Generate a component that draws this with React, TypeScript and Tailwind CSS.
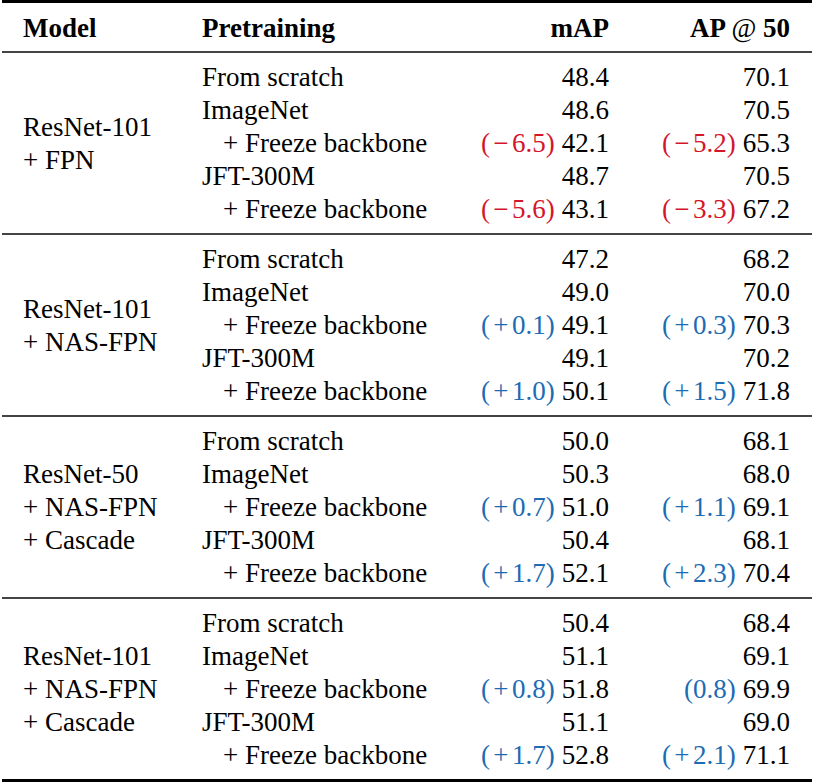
const GROUPS = [
  {
    model: ["ResNet-101", "+ FPN"],
    rows: [
      { name: "From scratch", map: "48.4", ap: "70.1" },
      { name: "ImageNet", map: "48.6", ap: "70.5" },
      { name: "+ Freeze backbone", sub: true, map: "42.1", ap: "65.3", dMap: ["−", "6.5"], dAp: ["−", "5.2"] },
      { name: "JFT-300M", map: "48.7", ap: "70.5" },
      { name: "+ Freeze backbone", sub: true, map: "43.1", ap: "67.2", dMap: ["−", "5.6"], dAp: ["−", "3.3"] },
    ],
  },
  {
    model: ["ResNet-101", "+ NAS-FPN"],
    rows: [
      { name: "From scratch", map: "47.2", ap: "68.2" },
      { name: "ImageNet", map: "49.0", ap: "70.0" },
      { name: "+ Freeze backbone", sub: true, map: "49.1", ap: "70.3", dMap: ["+", "0.1"], dAp: ["+", "0.3"] },
      { name: "JFT-300M", map: "49.1", ap: "70.2" },
      { name: "+ Freeze backbone", sub: true, map: "50.1", ap: "71.8", dMap: ["+", "1.0"], dAp: ["+", "1.5"] },
    ],
  },
  {
    model: ["ResNet-50", "+ NAS-FPN", "+ Cascade"],
    rows: [
      { name: "From scratch", map: "50.0", ap: "68.1" },
      { name: "ImageNet", map: "50.3", ap: "68.0" },
      { name: "+ Freeze backbone", sub: true, map: "51.0", ap: "69.1", dMap: ["+", "0.7"], dAp: ["+", "1.1"] },
      { name: "JFT-300M", map: "50.4", ap: "68.1" },
      { name: "+ Freeze backbone", sub: true, map: "52.1", ap: "70.4", dMap: ["+", "1.7"], dAp: ["+", "2.3"] },
    ],
  },
  {
    model: ["ResNet-101", "+ NAS-FPN", "+ Cascade"],
    rows: [
      { name: "From scratch", map: "50.4", ap: "68.4" },
      { name: "ImageNet", map: "51.1", ap: "69.1" },
      { name: "+ Freeze backbone", sub: true, map: "51.8", ap: "69.9", dMap: ["+", "0.8"], dAp: ["", "0.8"] },
      { name: "JFT-300M", map: "51.1", ap: "69.0" },
      { name: "+ Freeze backbone", sub: true, map: "52.8", ap: "71.1", dMap: ["+", "1.7"], dAp: ["+", "2.1"] },
    ],
  },
];

function Delta({ d }: { d?: string[] }) {
  if (!d) return null;
  const color = d[0] === "−" ? "text-[#d3162b]" : "text-[#1c6cb3]";
  return (
    <span className={`${color} mr-[7px]`}>
      (
      {d[0] && <span className="inline-block w-[0.82em] text-center">{d[0]}</span>}
      {d[1]})
    </span>
  );
}

function Rule({ thick }: { thick?: boolean }) {
  return <div className={thick ? "h-[3px] bg-black" : "h-[2px] bg-[#444]"} />;
}

export default function App() {
  return (
    <div className="w-[814px] h-[783px] bg-white overflow-hidden">
      <div className="ml-[2px] w-[810px] text-[27px] leading-[33px] text-black font-['Liberation_Serif','Times_New_Roman',serif]">
        <Rule thick />
        <div className="flex items-center h-[48px] pl-[21px] pr-[22px] pt-[3px] font-bold">
          <div className="w-[179px]">Model</div>
          <div className="w-[238px]">Pretraining</div>
          <div className="w-[169px] text-right">mAP</div>
          <div className="w-[181px] text-right">
            AP <span className="font-normal">@</span> 50
          </div>
        </div>
        <Rule />
        {GROUPS.map((g, gi) => (
          <div key={gi}>
            <div className="flex h-[180px] pl-[21px] pr-[22px] pt-[8px] pb-[7px]">
              <div className="w-[179px] flex flex-col justify-center">
                {g.model.map((m) => (
                  <div key={m}>{m}</div>
                ))}
              </div>
              <div className="flex flex-col">
                {g.rows.map((r, ri) => (
                  <div key={ri} className="flex h-[33px] whitespace-nowrap">
                    <div className={`w-[238px] ${r.sub ? "pl-[21px]" : ""}`}>{r.name}</div>
                    <div className="w-[169px] text-right">
                      <Delta d={r.dMap} />
                      {r.map}
                    </div>
                    <div className="w-[181px] text-right">
                      <Delta d={r.dAp} />
                      {r.ap}
                    </div>
                  </div>
                ))}
              </div>
            </div>
            {gi < GROUPS.length - 1 ? <Rule /> : <Rule thick />}
          </div>
        ))}
      </div>
    </div>
  );
}
